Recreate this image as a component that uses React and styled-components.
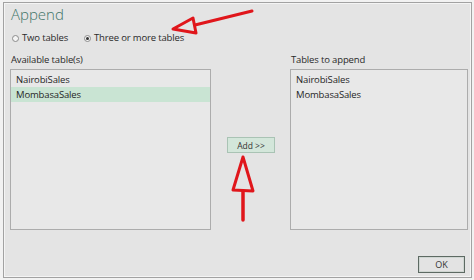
import React from 'react';
import styled, { createGlobalStyle } from 'styled-components';

const GlobalStyle = createGlobalStyle`
  html, body {
    margin: 0;
    padding: 0;
    background: #f2f2f2;
  }
  body {
    font-family: 'Open Sans', 'Liberation Sans', sans-serif;
    color: #262626;
  }
`;

const availableTables = ['NairobiSales', 'MombasaSales'];
const appendTables = ['NairobiSales', 'MombasaSales'];

const App = () => {
  return (
    <Page>
      <GlobalStyle />
      <Dialog>
        <Title>Append</Title>
        <RadioRow>
          <RadioOption>
            <RadioCircle />
            Two tables
          </RadioOption>
          <RadioOption>
            <RadioCircle checked />
            Three or more tables
          </RadioOption>
        </RadioRow>
        <Columns>
          <ColLabel>Available table(s)</ColLabel>
          <span />
          <ColLabel>Tables to append</ColLabel>
          <ListBox>
            {availableTables.map(name => (
              <ListItem key={name} selected={name === 'MombasaSales'}>
                {name}
              </ListItem>
            ))}
          </ListBox>
          <Middle>
            <AddButton>Add &gt;&gt;</AddButton>
          </Middle>
          <ListBox>
            {appendTables.map(name => (
              <ListItem key={name}>{name}</ListItem>
            ))}
          </ListBox>
        </Columns>
        <Footer>
          <OkButton>OK</OkButton>
        </Footer>
      </Dialog>
      <Annotations viewBox="0 0 474 280" width="474" height="280">
        <g fill="none" stroke="#e0161b" strokeWidth="3" strokeLinejoin="round" strokeLinecap="round">
          <path d="M173 29 L193 18 L196 33 Z" />
          <path d="M195 25 L252 11" />
          <path d="M243 157 L233 190 L253 191 Z" />
          <path d="M243 191 L243 220" strokeWidth="3.5" />
        </g>
      </Annotations>
    </Page>
  );
};

export default App;

const Page = styled.div`
  position: relative;
  width: 474px;
  height: 280px;
  padding: 2px 0 0 3px;
  box-sizing: border-box;
`;

const Dialog = styled.div`
  box-sizing: border-box;
  width: 469px;
  height: 276px;
  border: 1px solid #a2a2a2;
  box-shadow: inset 0 0 0 1px #f4f4f4;
  background: #e4e4e4;
  padding: 1px 6px 0 6px;
  display: flex;
  flex-direction: column;
`;

const Title = styled.div`
  font-size: 15px;
  font-weight: 300;
  line-height: 20px;
  color: #3f7468;
  padding-left: 1px;
`;

const RadioRow = styled.div`
  display: flex;
  align-items: center;
  gap: 16px;
  margin-top: 7px;
  height: 14px;
  padding-left: 2px;
`;

const RadioOption = styled.label`
  display: flex;
  align-items: center;
  gap: 3px;
  font-size: 9.5px;
  letter-spacing: -0.15px;
  line-height: 14px;
  color: #2a2a2a;
`;

const RadioCircle = styled.span`
  width: 7px;
  height: 7px;
  border-radius: 50%;
  border: 1px solid #8c8c8c;
  background: #f4f4f4;
  box-sizing: border-box;
  position: relative;
  &::after {
    content: '';
    display: ${p => (p.checked ? 'block' : 'none')};
    position: absolute;
    left: 1px;
    top: 1px;
    width: 3px;
    height: 3px;
    border-radius: 50%;
    background: #333;
  }
`;

const Columns = styled.div`
  display: grid;
  grid-template-columns: 201px 79px 178px;
  grid-template-rows: 14px 161px;
  row-gap: 2px;
  margin-top: 8px;
`;

const ColLabel = styled.div`
  font-size: 9.5px;
  letter-spacing: -0.15px;
  line-height: 14px;
  color: #2a2a2a;
  padding-left: 1px;
`;

const ListBox = styled.div`
  box-sizing: border-box;
  border: 1px solid #acacac;
  background: #e8e8e8;
  padding-top: 2px;
`;

const ListItem = styled.div`
  height: 15px;
  line-height: 15px;
  font-size: 9.5px;
  letter-spacing: -0.15px;
  padding-left: 5px;
  color: #262626;
  background: ${p => (p.selected ? '#c9e4d3' : 'transparent')};
`;

const Middle = styled.div`
  display: flex;
  justify-content: center;
  align-items: flex-start;
  padding-top: 68px;
  padding-left: 1px;
`;

const AddButton = styled.button`
  width: 48px;
  height: 16px;
  padding: 0;
  border: 1px solid #a9c3b4;
  background: #d3e6da;
  font-family: 'Open Sans', 'Liberation Sans', sans-serif;
  font-size: 8.5px;
  color: #333;
`;

const Footer = styled.div`
  display: flex;
  justify-content: flex-end;
  margin-top: 26px;
`;

const OkButton = styled.button`
  width: 47px;
  height: 17px;
  padding: 0;
  border: 1px solid #5d6a63;
  box-shadow: inset 0 0 0 1px #cfd6d2;
  background: #e3e3e3;
  font-family: 'Open Sans', 'Liberation Sans', sans-serif;
  font-size: 9px;
  color: #333;
`;

const Annotations = styled.svg`
  position: absolute;
  left: 0;
  top: 0;
  pointer-events: none;
`;
